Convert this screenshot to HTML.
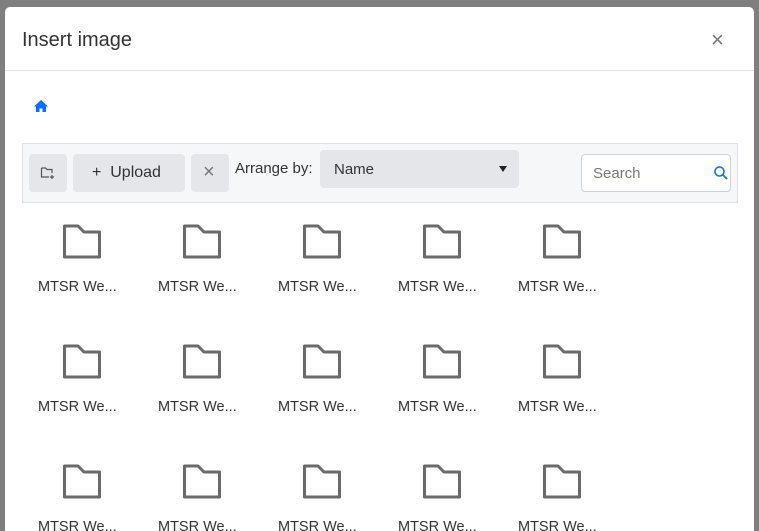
<!DOCTYPE html>
<html><head><style>
html,body{margin:0;width:759px;height:531px;overflow:hidden}
body{background:#7f7f7f;font-family:"Liberation Sans",sans-serif;position:relative}
.modal{position:absolute;left:5px;top:7px;width:749px;height:540px;background:#fff;border-radius:5px}
.a{position:absolute;white-space:nowrap}
.btn{position:absolute;background:#e4e6ea;border-radius:4px}
.lbl{position:absolute;font-size:14.5px;color:#333;white-space:nowrap}
</style></head><body>
<div class="modal"></div>
<div class="a" style="left:22px;top:29px;font-size:20px;color:#333">Insert image</div>
<div class="a" style="left:711px;top:27px;font-size:22px;color:#777">×</div>
<div class="a" style="left:5px;top:70px;width:749px;height:1px;background:#dee2e6"></div>
<svg class="a" style="left:34px;top:99px" width="14" height="14" viewBox="0 0 14 14"><path d="M7 1 L14 7.5 L12 7.5 L12 13 L8.5 13 L8.5 9.5 L5.5 9.5 L5.5 13 L2 13 L2 7.5 L0 7.5 Z" fill="#0d6efd"/></svg>
<div class="a" style="left:22px;top:143px;width:714px;height:58px;background:#f6f7f9;border:1px solid #dee2e6"></div>
<div class="btn" style="left:29px;top:154px;width:38px;height:38px"></div>
<svg class="a" style="left:40px;top:165px" width="16" height="16" viewBox="0 0 16 16"><path d="M1.5 3 H5.5 L7 4.5 H12 V8 M1.5 3 V12 H9" fill="none" stroke="#555" stroke-width="1.2"/><path d="M12 10 V14 M10 12 H14" stroke="#555" stroke-width="1.2"/></svg>
<div class="btn" style="left:73px;top:154px;width:112px;height:38px"></div>
<div class="a" style="left:92px;top:164px;font-size:16px;color:#333">+&nbsp; Upload</div>
<div class="btn" style="left:191px;top:154px;width:38px;height:38px"></div>
<div class="a" style="left:203px;top:161px;font-size:20px;color:#777">×</div>
<div class="a" style="left:235px;top:160px;font-size:15px;color:#333">Arrange by:</div>
<div class="btn" style="left:320px;top:150px;width:199px;height:38px"></div>
<div class="a" style="left:334px;top:161px;font-size:15px;color:#333">Name</div>
<div class="a" style="left:499px;top:166px;width:0;height:0;border-left:4px solid transparent;border-right:4px solid transparent;border-top:6px solid #222"></div>
<div class="a" style="left:581px;top:154px;width:148px;height:36px;background:#fff;border:1px solid #ced4da;border-radius:4px"></div>
<div class="a" style="left:593px;top:165px;font-size:15px;color:#777">Search</div>
<svg class="a" style="left:713px;top:165px" width="16" height="16" viewBox="0 0 16 16"><circle cx="6.5" cy="6.5" r="4.5" fill="none" stroke="#0d6efd" stroke-width="1.6"/><path d="M10 10 L14 14" stroke="#0d6efd" stroke-width="1.8"/></svg>
<div id="g"></div>
<script>
var h='';
[225,345,465].forEach(function(y){[0,1,2,3,4].forEach(function(i){var cx=63+i*120;
h+='<svg class="a" style="left:'+(cx-2)+'px;top:'+(y-2)+'px" width="42" height="38" viewBox="0 0 42 38"><path d="M4 3 H17 L23 9 H38.5 V34 H3.5 V3 Z" fill="none" stroke="#6a6a6a" stroke-width="3" stroke-linejoin="round"/></svg>';
h+='<div class="lbl" style="left:'+(cx-25)+'px;top:'+(y+54)+'px">MTSR We...</div>';});});
document.getElementById('g').innerHTML=h;
</script>
</body></html>
